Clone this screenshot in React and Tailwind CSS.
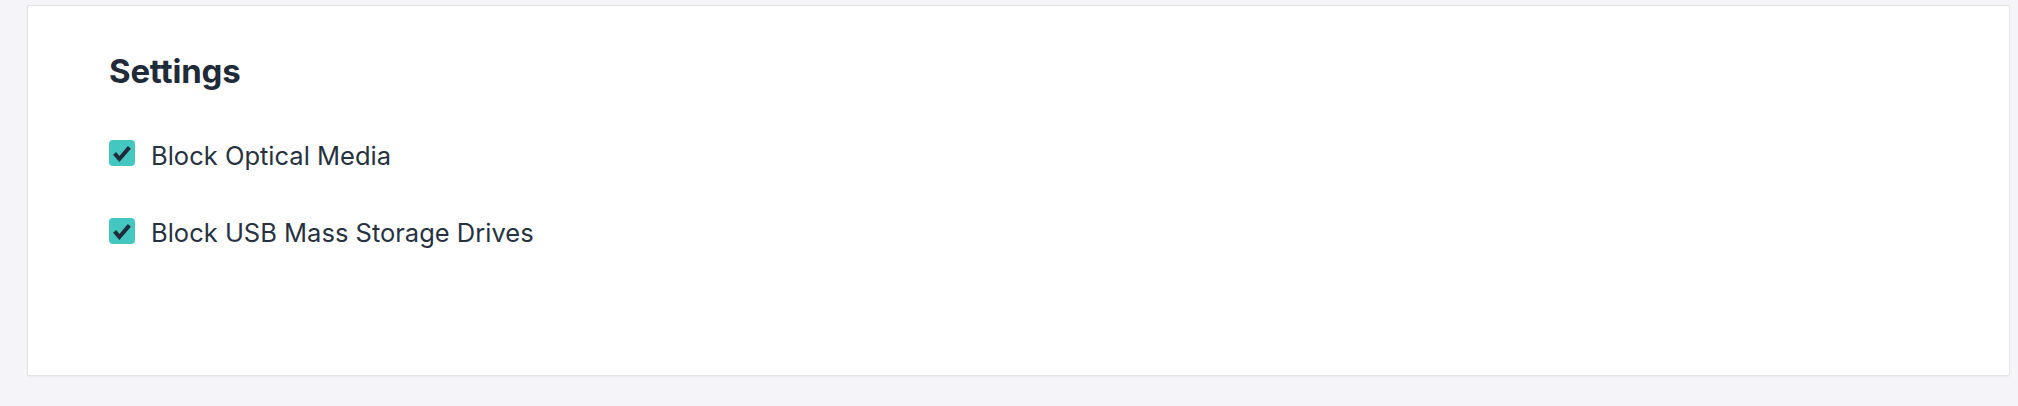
import React, { useState } from 'react';

const settings = [
  { id: 'optical', label: 'Block Optical Media' },
  { id: 'usb', label: 'Block USB Mass Storage Drives' },
];

const CheckBox = ({ checked, onToggle }) => (
  <button
    type="button"
    onClick={onToggle}
    className={`w-[26px] h-[26px] shrink-0 rounded-[4px] flex items-center justify-center ${
      checked ? 'bg-[#44c7c0]' : 'bg-white border border-[#c8cdd2]'
    }`}
  >
    {checked && (
      <svg viewBox="0 0 26 26" className="w-[26px] h-[26px]">
        <path d="M5.6 13.4 L10.4 19 L20.4 7.4" fill="none" stroke="#1f2b38" strokeWidth="4" strokeLinejoin="miter" />
      </svg>
    )}
  </button>
);

export default function App() {
  const [values, setValues] = useState({ optical: true, usb: true });

  return (
    <div className="w-[2018px] h-[406px] bg-[#f5f5f9] pt-[5px] pl-[27px] font-['Inter',sans-serif]">
      <div className="w-[1983px] h-[371px] bg-white border border-[#e1e4e7] rounded-[2px] shadow-[0_1px_2px_rgba(0,0,0,0.04)] pl-[81px] pt-[45px]">
        <h2 className="text-[33px] leading-[40px] font-bold text-[#1f2b38] tracking-[-0.2px]">Settings</h2>
        <div className="flex flex-col gap-[46px] mt-[49px]">
          {settings.map((s) => (
            <label key={s.id} className="flex items-start gap-[16px] cursor-pointer">
              <CheckBox
                checked={values[s.id]}
                onToggle={() => setValues((v) => ({ ...v, [s.id]: !v[s.id] }))}
              />
              <span className="mt-[-0.5px] text-[25.5px] leading-[32px] text-[#26323f]">{s.label}</span>
            </label>
          ))}
        </div>
      </div>
    </div>
  );
}
